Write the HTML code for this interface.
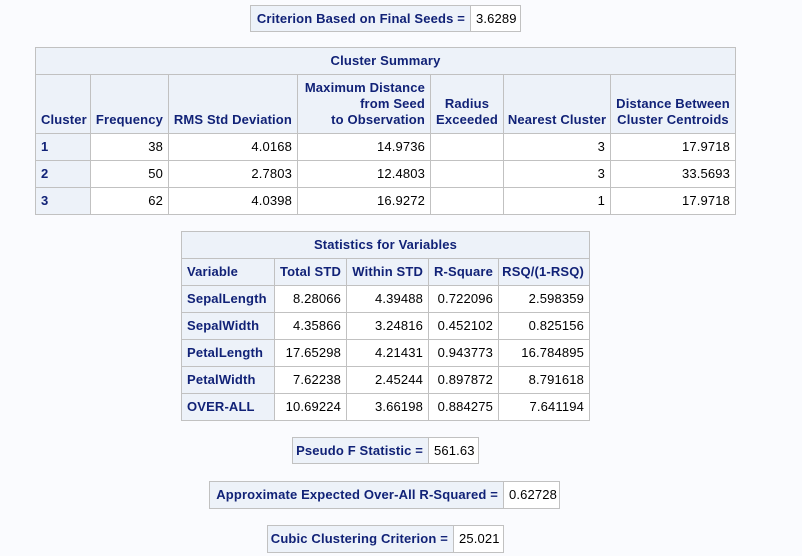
<!DOCTYPE html>
<html><head><meta charset="utf-8"><style>
body{margin:0;width:802px;height:556px;background:#fafbfe;position:relative;overflow:hidden;font-family:"Liberation Sans",Arial,sans-serif;font-size:13px;letter-spacing:0.15px}
.c{position:absolute;box-sizing:border-box;border:1px solid #c1c1c1;display:flex;padding:0 5px;line-height:16px;white-space:nowrap}
.h{background:#edf2f9;color:#112277;font-weight:bold}
.d{background:#fff;color:#000}
.r{justify-content:flex-end;text-align:right}
.m{justify-content:center;text-align:center}
.l{justify-content:flex-start}
.v{align-items:center}
.b{align-items:flex-end;padding-bottom:5px}
</style></head><body>
<div class="c h v r" style="left:250px;top:5px;width:221px;height:27px">Criterion Based on Final Seeds =</div>
<div class="c d v l" style="left:470px;top:5px;width:51px;height:27px">3.6289</div>

<div class="c h v m" style="left:35px;top:47px;width:701px;height:28px">Cluster Summary</div>
<div class="c h b l" style="left:35px;top:74px;width:56px;height:60px">Cluster</div>
<div class="c h b r" style="left:90px;top:74px;width:79px;height:60px">Frequency</div>
<div class="c h b r" style="left:168px;top:74px;width:130px;height:60px">RMS Std Deviation</div>
<div class="c h b r" style="left:297px;top:74px;width:134px;height:60px">Maximum Distance<br>from Seed<br>to Observation</div>
<div class="c h b m" style="left:430px;top:74px;width:74px;height:60px">Radius<br>Exceeded</div>
<div class="c h b m" style="left:503px;top:74px;width:108px;height:60px">Nearest Cluster</div>
<div class="c h b m" style="left:610px;top:74px;width:126px;height:60px">Distance Between<br>Cluster Centroids</div>

<div class="c h v l" style="left:35px;top:133px;width:56px;height:28px">1</div>
<div class="c d v r" style="left:90px;top:133px;width:79px;height:28px">38</div>
<div class="c d v r" style="left:168px;top:133px;width:130px;height:28px">4.0168</div>
<div class="c d v r" style="left:297px;top:133px;width:134px;height:28px">14.9736</div>
<div class="c d v r" style="left:430px;top:133px;width:74px;height:28px"></div>
<div class="c d v r" style="left:503px;top:133px;width:108px;height:28px">3</div>
<div class="c d v r" style="left:610px;top:133px;width:126px;height:28px">17.9718</div>

<div class="c h v l" style="left:35px;top:160px;width:56px;height:28px">2</div>
<div class="c d v r" style="left:90px;top:160px;width:79px;height:28px">50</div>
<div class="c d v r" style="left:168px;top:160px;width:130px;height:28px">2.7803</div>
<div class="c d v r" style="left:297px;top:160px;width:134px;height:28px">12.4803</div>
<div class="c d v r" style="left:430px;top:160px;width:74px;height:28px"></div>
<div class="c d v r" style="left:503px;top:160px;width:108px;height:28px">3</div>
<div class="c d v r" style="left:610px;top:160px;width:126px;height:28px">33.5693</div>

<div class="c h v l" style="left:35px;top:187px;width:56px;height:28px">3</div>
<div class="c d v r" style="left:90px;top:187px;width:79px;height:28px">62</div>
<div class="c d v r" style="left:168px;top:187px;width:130px;height:28px">4.0398</div>
<div class="c d v r" style="left:297px;top:187px;width:134px;height:28px">16.9272</div>
<div class="c d v r" style="left:430px;top:187px;width:74px;height:28px"></div>
<div class="c d v r" style="left:503px;top:187px;width:108px;height:28px">1</div>
<div class="c d v r" style="left:610px;top:187px;width:126px;height:28px">17.9718</div>

<div class="c h v m" style="left:181px;top:231px;width:409px;height:28px">Statistics for Variables</div>
<div class="c h v l" style="left:181px;top:258px;width:94px;height:28px">Variable</div>
<div class="c h v r" style="left:274px;top:258px;width:73px;height:28px">Total STD</div>
<div class="c h v r" style="left:346px;top:258px;width:83px;height:28px">Within STD</div>
<div class="c h v r" style="left:428px;top:258px;width:71px;height:28px">R-Square</div>
<div class="c h v r" style="left:498px;top:258px;width:92px;height:28px">RSQ/(1-RSQ)</div>

<div class="c h v l" style="left:181px;top:285px;width:94px;height:28px">SepalLength</div>
<div class="c d v r" style="left:274px;top:285px;width:73px;height:28px">8.28066</div>
<div class="c d v r" style="left:346px;top:285px;width:83px;height:28px">4.39488</div>
<div class="c d v r" style="left:428px;top:285px;width:71px;height:28px">0.722096</div>
<div class="c d v r" style="left:498px;top:285px;width:92px;height:28px">2.598359</div>

<div class="c h v l" style="left:181px;top:312px;width:94px;height:28px">SepalWidth</div>
<div class="c d v r" style="left:274px;top:312px;width:73px;height:28px">4.35866</div>
<div class="c d v r" style="left:346px;top:312px;width:83px;height:28px">3.24816</div>
<div class="c d v r" style="left:428px;top:312px;width:71px;height:28px">0.452102</div>
<div class="c d v r" style="left:498px;top:312px;width:92px;height:28px">0.825156</div>

<div class="c h v l" style="left:181px;top:339px;width:94px;height:28px">PetalLength</div>
<div class="c d v r" style="left:274px;top:339px;width:73px;height:28px">17.65298</div>
<div class="c d v r" style="left:346px;top:339px;width:83px;height:28px">4.21431</div>
<div class="c d v r" style="left:428px;top:339px;width:71px;height:28px">0.943773</div>
<div class="c d v r" style="left:498px;top:339px;width:92px;height:28px">16.784895</div>

<div class="c h v l" style="left:181px;top:366px;width:94px;height:28px">PetalWidth</div>
<div class="c d v r" style="left:274px;top:366px;width:73px;height:28px">7.62238</div>
<div class="c d v r" style="left:346px;top:366px;width:83px;height:28px">2.45244</div>
<div class="c d v r" style="left:428px;top:366px;width:71px;height:28px">0.897872</div>
<div class="c d v r" style="left:498px;top:366px;width:92px;height:28px">8.791618</div>

<div class="c h v l" style="left:181px;top:393px;width:94px;height:28px">OVER-ALL</div>
<div class="c d v r" style="left:274px;top:393px;width:73px;height:28px">10.69224</div>
<div class="c d v r" style="left:346px;top:393px;width:83px;height:28px">3.66198</div>
<div class="c d v r" style="left:428px;top:393px;width:71px;height:28px">0.884275</div>
<div class="c d v r" style="left:498px;top:393px;width:92px;height:28px">7.641194</div>

<div class="c h v r" style="left:292px;top:437px;width:137px;height:27px">Pseudo F Statistic =</div>
<div class="c d v l" style="left:428px;top:437px;width:51px;height:27px">561.63</div>

<div class="c h v r" style="left:209px;top:481px;width:295px;height:28px">Approximate Expected Over-All R-Squared =</div>
<div class="c d v l" style="left:503px;top:481px;width:57px;height:28px">0.62728</div>

<div class="c h v r" style="left:267px;top:525px;width:187px;height:28px">Cubic Clustering Criterion =</div>
<div class="c d v l" style="left:453px;top:525px;width:51px;height:28px">25.021</div>
</body></html>
